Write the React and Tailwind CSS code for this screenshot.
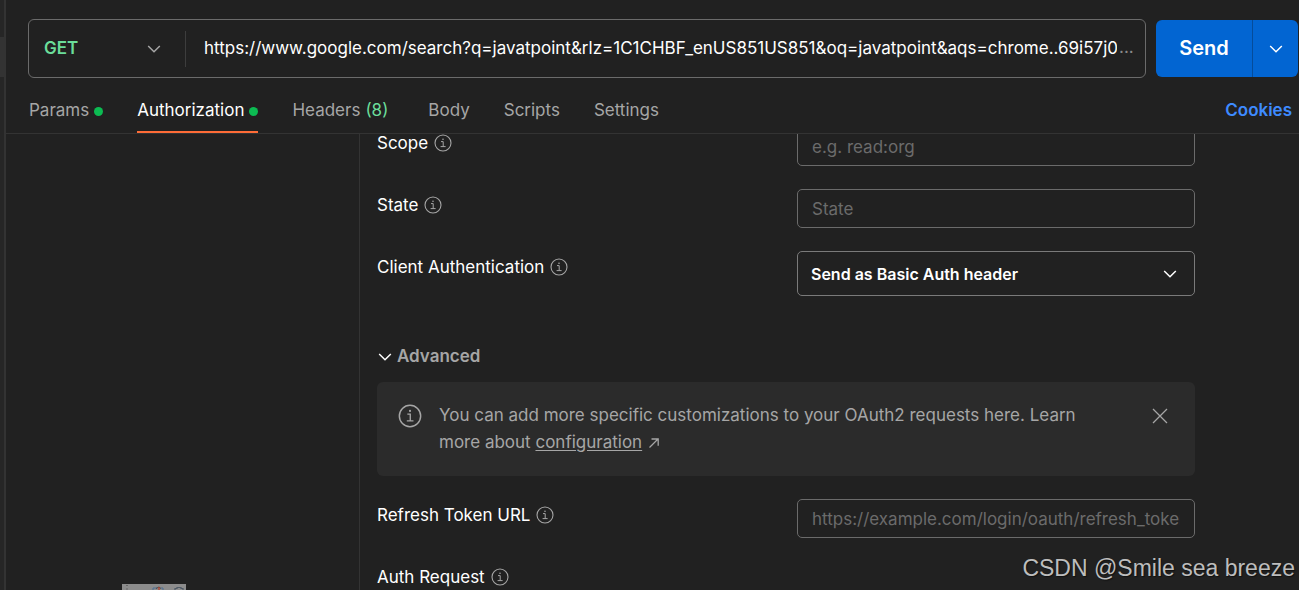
import React from 'react';

const tabs = [
  { name: 'Params', dot: true },
  { name: 'Authorization', dot: true, active: true },
  { name: 'Headers', count: 8 },
  { name: 'Body' },
  { name: 'Scripts' },
  { name: 'Settings' },
];

const requestUrl =
  'https://www.google.com/search?q=javatpoint&rlz=1C1CHBF_enUS851US851&oq=javatpoint&aqs=chrome..69i57j0l7.3215j0j7&sourceid=chrome&ie=UTF-8';

const Chevron = ({ className = '' }) => (
  <svg viewBox="0 0 14 8" className={`w-[14px] h-2 shrink-0 pointer-events-none ${className}`} fill="none" stroke="currentColor" strokeWidth="1.5">
    <path d="M1.2 1l5.8 5.8L12.8 1" />
  </svg>
);

const InfoIcon = ({ className = '' }) => (
  <svg viewBox="0 0 18 18" className={`shrink-0 text-[#a6a6a6] ${className}`} fill="none" stroke="currentColor" aria-hidden="true">
    <circle cx="9" cy="9" r="8" strokeWidth="1.1" />
    <path d="M7 7.6h2.2v4.9M6.6 12.6h5" strokeWidth="1" />
    <circle cx="9" cy="5.2" r="0.8" fill="currentColor" stroke="none" />
  </svg>
);

const Field = ({ id, label, children }) => (
  <div className="grid grid-cols-[420px_1fr] items-start">
    <div className="flex items-center gap-[6px] h-[33px] text-[17px] text-white">
      <label htmlFor={id}>{label}</label>
      <InfoIcon className="w-[18px] h-[18px] mb-[2px]" />
    </div>
    {children}
  </div>
);

const TextInput = ({ id, placeholder }) => (
  <input
    id={id}
    type="text"
    placeholder={placeholder}
    className="w-full min-w-0 h-[39px] px-[14px] rounded-[5px] border border-[#6b6b6b] bg-transparent text-[17px] text-white placeholder:text-[#6b6b6b] outline-none"
  />
);

const RequestBar = () => (
  <div className="flex items-center gap-[10px] pl-[22px] pr-px">
    <div className="flex flex-1 min-w-0 items-center h-[59px] rounded-md border border-[#6b6b6b]">
      <div className="relative flex items-center w-[157px] h-9 border-r border-[#3d3d3d]">
        <select
          aria-label="Method"
          defaultValue="GET"
          className="w-full h-full pl-[15px] appearance-none bg-transparent text-[17px] font-semibold text-[#6bdd9a] outline-none"
        >
          <option>GET</option>
        </select>
        <Chevron className="absolute right-6 text-[#a6a6a6]" />
      </div>
      <input
        type="text"
        aria-label="Request URL"
        defaultValue={requestUrl}
        className="flex-1 min-w-0 h-9 ml-[18px] pb-[2px] bg-transparent text-[17px] text-white outline-none"
      />
      <span className="w-7 pl-[2px] pb-[2px] text-[17px] text-[#8a8a8a]">...</span>
    </div>
    <div className="flex h-[57px] rounded-md bg-[#0265d2] text-white overflow-hidden">
      <button type="button" className="w-24 pb-[2px] text-[20px] font-semibold">Send</button>
      <button type="button" aria-label="Send options" className="flex items-center justify-center w-[46px] border-l border-[#054c9a]">
        <Chevron />
      </button>
    </div>
  </div>
);

const Tabs = () => (
  <div className="flex items-end justify-between h-14 pl-[23px] pr-[7px] border-b border-[#333333] text-[17px] text-[#a6a6a6]">
    <div className="flex gap-[34px]">
      {tabs.map((tab) => (
        <button
          key={tab.name}
          type="button"
          className={`flex items-center gap-[5px] h-[42px] border-b-2 ${tab.active ? 'border-[#ff6c37] text-white' : 'border-transparent'}`}
        >
          {tab.name}
          {tab.dot && <span className="w-[9px] h-[9px] rounded-full bg-[#0cbb52]"></span>}
          {tab.count && <span className="mr-[6px] text-[#6bdd9a]">({tab.count})</span>}
        </button>
      ))}
    </div>
    <a href="#cookies" className="flex items-center h-[42px] border-b-2 border-transparent font-semibold text-[#3e8bff]">Cookies</a>
  </div>
);

const Banner = () => (
  <div className="flex items-start mt-[9px] mb-[23px] pt-5 pb-5 pl-[21px] pr-[27px] rounded-md bg-[#2b2b2b] text-[17px] leading-[27px] text-[#a6a6a6]">
    <InfoIcon className="w-6 h-6 mt-[2px] mr-[17px]" />
    <p className="w-[650px]">
      You can add more specific customizations to your OAuth2 requests here. Learn more about{' '}
      <a href="#configuration" className="underline underline-offset-2">configuration</a>
      <svg viewBox="0 0 10 10" className="inline-block w-[10px] h-[10px] ml-[7px]" fill="none" stroke="currentColor" strokeWidth="1.3">
        <path d="M0.5 9.5l8.5-8.5M2.5 1h6.7v6.7" />
      </svg>
    </p>
    <button type="button" aria-label="Dismiss" className="ml-auto mt-[6px]">
      <svg viewBox="0 0 16 16" className="w-4 h-4" fill="none" stroke="currentColor" strokeWidth="1.3">
        <path d="M1 1l14 14M15 1L1 15" />
      </svg>
    </button>
  </div>
);

const AuthForm = () => (
  <form className="-mt-[7px] max-w-[818px]">
    <div className="flex flex-col gap-[23px]">
      <Field id="scope" label="Scope">
        <TextInput id="scope" placeholder="e.g. read:org" />
      </Field>
      <Field id="state" label="State">
        <TextInput id="state" placeholder="State" />
      </Field>
      <Field id="client-auth" label="Client Authentication">
        <div className="relative flex items-center">
          <select
            id="client-auth"
            className="w-full h-[45px] px-[13px] appearance-none rounded-[5px] border border-[#7a7a7a] bg-transparent text-[16px] font-semibold text-white outline-none"
          >
            <option>Send as Basic Auth header</option>
          </select>
          <Chevron className="absolute right-[18px] text-white" />
        </div>
      </Field>
    </div>
    <button type="button" className="flex items-center gap-[5px] h-8 mt-[45px] pl-[1px] text-[17px] font-semibold text-[#a6a6a6]">
      <Chevron className="text-white" />
      Advanced
    </button>
    <Banner />
    <div className="flex flex-col gap-[23px]">
      <Field id="refresh-url" label="Refresh Token URL">
        <TextInput id="refresh-url" placeholder="https://example.com/login/oauth/refresh_token" />
      </Field>
      <Field id="auth-request" label="Auth Request" />
    </div>
  </form>
);

// Strip of toolbar that peeks in at the bottom of the left column
const ToolbarPeek = () => (
  <svg viewBox="0 0 64 6" className="w-16 h-[6px] mt-auto ml-[116px]" aria-hidden="true">
    <rect width="64" height="6" fill="#8c8c8c" />
    <path d="M4 1.5h2M4 5h2" stroke="#666666" strokeWidth="1.2" />
    <path d="M31 6V4h4M39 4h2v2" fill="none" stroke="#4d6f94" strokeWidth="1" />
    <path d="M34 4.5l3-1.5 2 1.5" fill="none" stroke="#474747" />
    <path d="M37 3v3" stroke="#b8432f" strokeWidth="1.3" />
    <path d="M53 6V4.5h2V3.5h4v1h2V6" fill="none" stroke="#4f5a66" strokeWidth="1.2" />
  </svg>
);

const App = () => {
  return (
    <div className="flex h-screen overflow-hidden bg-[#212121] font-['Inter',sans-serif]">
      <div className="w-[6px] shrink-0 pt-[37px] border-r-2 border-[#333333] bg-[#262626]">
        <div className="h-10 bg-[#333333]"></div>
      </div>
      <main className="flex flex-col flex-1 min-w-0 pt-[19px]">
        <RequestBar />
        <Tabs />
        <div className="flex flex-1 min-h-0">
          <aside className="flex flex-col w-[354px] shrink-0 border-r border-[#333333]">
            <ToolbarPeek />
          </aside>
          <section className="flex-1 min-w-0 pl-[17px] overflow-hidden">
            <AuthForm />
          </section>
        </div>
      </main>
      <div className="absolute right-1 bottom-[6px] font-['Liberation_Sans',sans-serif] text-[23px] leading-8 text-[#bdbdbd] [text-shadow:1px_1px_1px_#111]">
        CSDN @Smile sea breeze
      </div>
    </div>
  );
};

export default App;
